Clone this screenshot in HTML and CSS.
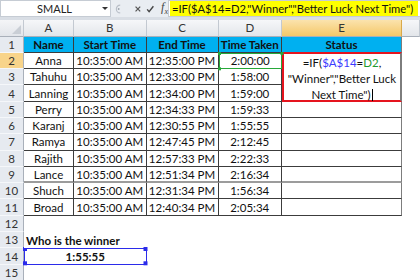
FILE: index.html
```html
<!DOCTYPE html>
<html lang="en">
<head>
    <meta charset="UTF-8">
    <meta name="viewport" content="width=device-width, initial-scale=1.0">
    <title>Who is the winner</title>
    <link rel="stylesheet" href="styles.css">
</head>
<body>
    <div class="planilha">
        <div class="formula-bar">
            <div class="name-box">
                <span class="name">SMALL</span>
                <span class="arrow"></span>
            </div>
            <div class="fx-buttons">
                <svg class="grip" width="10" height="12" viewBox="0 0 10 12">
                    <path d="M8 1 A5 5 0 0 0 8 11" fill="none" stroke="#b8bec7" stroke-width="1.4"/>
                    <circle cx="6" cy="6" r="1.2" fill="#9aa2ad"/>
                </svg>
                <svg class="btn" width="10" height="10" viewBox="0 0 10 10">
                    <path d="M2 2 L8 8 M8 2 L2 8" stroke="#555" stroke-width="1.6"/>
                </svg>
                <svg class="btn" width="11" height="10" viewBox="0 0 11 10">
                    <path d="M1.5 5.5 L4 8.5 L9.5 1.5" fill="none" stroke="#444" stroke-width="1.8"/>
                </svg>
                <span class="fx">f<sub>x</sub></span>
            </div>
            <div class="formula-input">
                <span class="hl">=IF($A$14=D2,"Winner","Better Luck Next Time")</span>
            </div>
        </div>
        <div class="band"></div>
        <div class="grid" id="grid"></div>
    </div>

    <script>
        const dados = [
            ["Anna", "10:35:00 AM", "12:35:00 PM", "2:00:00"],
            ["Tahuhu", "10:35:00 AM", "12:33:00 PM", "1:58:00"],
            ["Lanning", "10:35:00 AM", "12:34:00 PM", "1:59:00"],
            ["Perry", "10:35:00 AM", "12:34:33 PM", "1:59:33"],
            ["Karanj", "10:35:00 AM", "12:30:55 PM", "1:55:55"],
            ["Ramya", "10:35:00 AM", "12:47:45 PM", "2:12:45"],
            ["Rajith", "10:35:00 AM", "12:57:33 PM", "2:22:33"],
            ["Lance", "10:35:00 AM", "12:51:34 PM", "2:16:34"],
            ["Shuch", "10:35:00 AM", "12:31:34 PM", "1:56:34"],
            ["Broad", "10:35:00 AM", "12:40:34 PM", "2:05:34"]
        ];
        const titulos = ["Name", "Start Time", "End Time", "Time Taken", "Status"];

        function celula(classes, html) {
            const div = document.createElement("div");
            div.className = "c " + classes;
            if (html) div.innerHTML = html;
            document.getElementById("grid").appendChild(div);
            return div;
        }

        function montarPlanilha() {
            celula("corner");
            ["A", "B", "C", "D", "E"].forEach(l => celula("ch" + (l === "E" ? " sel" : ""), l));
            celula("ch blank");

            for (let r = 1; r <= 15; r++) {
                celula("rh" + (r === 2 ? " sel" : ""), r);

                if (r === 1) {
                    titulos.forEach((t, i) => celula("t th" + (i === 4 ? " last" : ""), t));
                } else if (r <= 11) {
                    const linha = dados[r - 2];
                    const quebra = r === 9 ? " brk" : "";
                    linha.forEach((v, i) => celula("t" + quebra + (r === 2 && i === 3 ? " ref-green" : ""), v));
                    if (r === 2) {
                        celula("t last editing",
                            '<span>=IF(<b class="blue">$A$14</b>=<b class="green">D2</b>,</span>' +
                            '<span>"Winner","Better Luck</span>' +
                            '<span>Next Time")<i class="cursor"></i></span>');
                    } else if (r > 4) {
                        celula("t last" + quebra);
                    }
                } else if (r === 13) {
                    celula("label", "Who is the winner");
                    celula("vazio"); celula("vazio"); celula("vazio"); celula("vazio");
                } else if (r === 14) {
                    celula("ref-blue", "1:55:55");
                    celula("vazio"); celula("vazio"); celula("vazio");
                } else {
                    celula("vazio"); celula("vazio"); celula("vazio"); celula("vazio"); celula("vazio");
                }
                celula("free");
            }
        }

        window.onload = montarPlanilha;
    </script>
</body>
</html>
```

FILE: styles.css
```css
:root {
    --azul-titulo: #00b0f0;
    --linha: #3c3c3c;
    --cabecalho: #e6eaf0;
    --cabecalho-borda: #c3c9d1;
    --selecao: #f8d48a;
}

body {
    margin: 0;
    background: #fff;
}

.planilha {
    width: 420px;
    height: 280px;
    overflow: hidden;
    font-family: Lato, 'Liberation Sans', sans-serif;
    font-size: 11.5px;
    color: #111;
}

/* barra de formula */
.formula-bar {
    display: flex;
    height: 17px;
    background: #e9edf2;
}

.formula-bar .name-box {
    width: 111px;
    display: flex;
    align-items: center;
    box-sizing: border-box;
    background: #fff;
    border: 1px solid #c6ccd4;
    padding-left: 36px;
    font-size: 11px;
    color: #222;
}

.formula-bar .name-box .name {
    flex: 1;
}

.formula-bar .arrow {
    width: 0;
    height: 0;
    margin-right: 2px;
    border-left: 3px solid transparent;
    border-right: 3px solid transparent;
    border-top: 3px solid #333;
}

.formula-bar .fx-buttons {
    width: 57px;
    display: flex;
    align-items: center;
    gap: 4px;
    padding-left: 3px;
    box-sizing: border-box;
}

.formula-bar .grip {
    margin-right: 8px;
}

.formula-bar .fx {
    font-family: 'Liberation Serif', serif;
    font-style: italic;
    font-size: 12px;
    color: #444;
    margin-left: 3px;
}

.formula-bar .fx sub {
    font-size: 8px;
}

.formula-bar .formula-input {
    flex: 1;
    display: flex;
    align-items: center;
    background: #fff;
    border: 1px solid #c6ccd4;
    border-right: none;
    padding-left: 1px;
    font-size: 11.2px;
}

.formula-bar .hl {
    background: #ffff00;
    padding: 1px 5px 1px 2px;
    white-space: nowrap;
}

.band {
    height: 3px;
    background: #d9dee5;
}

/* grade */
.grid {
    display: grid;
    grid-template-columns: 24px 50px 72.5px 72px 63.5px 120px 1fr;
    grid-template-rows: 16.5px repeat(15, 16.3px);
}

.grid .c {
    box-sizing: border-box;
    display: flex;
    align-items: center;
    justify-content: center;
    white-space: nowrap;
    background: #fff;
    min-width: 0;
}

.grid .vazio,
.grid .free {
    background: transparent;
}

.grid .corner {
    background: linear-gradient(#f4f5f7, #e2e5ea);
    border-right: 1px solid var(--cabecalho-borda);
    border-bottom: 1px solid #a9b0ba;
    position: relative;
}

.grid .corner::after {
    content: "";
    position: absolute;
    right: 2px;
    bottom: 2px;
    border-left: 9px solid transparent;
    border-bottom: 9px solid #c9ced5;
}

.grid .ch {
    background: linear-gradient(#f6f7f9, #e3e6ea);
    border-right: 1px solid var(--cabecalho-borda);
    border-bottom: 1px solid #a9b0ba;
    color: #333;
}

.grid .ch.sel {
    background: linear-gradient(#fbe3ad, #f4c869);
    border-right-color: #d9a94a;
}

.grid .rh {
    background: var(--cabecalho);
    border-right: 1px solid #a9b0ba;
    border-bottom: 1px solid #f5f7fa;
    color: #333;
}

.grid .rh.sel {
    background: var(--selecao);
}

.grid .t {
    border-right: 1px solid var(--linha);
    border-bottom: 1px solid var(--linha);
}

.grid .t.last {
    border-right-color: #7d7d7d;
}

.grid .t.brk {
    border-bottom: 2px solid #9c9c9c;
}

.grid .th {
    background: var(--azul-titulo);
    font-weight: bold;
}

.grid .ref-green {
    border: 1px solid #27a83a;
    position: relative;
}

.grid .ref-green::after {
    content: "";
    position: absolute;
    left: -2px;
    top: -2px;
    width: 3px;
    height: 3px;
    background: #27a83a;
    box-shadow: 62.5px 0 #27a83a, 0 15.3px #27a83a;
}

.grid .editing {
    grid-row: span 3;
    flex-direction: column;
    justify-content: flex-start;
    border: 2px solid #e5141e;
    margin-top: -1px;
    padding-top: 1px;
    line-height: 16.3px;
}

.grid .editing b {
    font-weight: normal;
}

.grid .editing .blue {
    color: #3b3bff;
}

.grid .editing .green {
    color: #1f9a2e;
}

.grid .cursor {
    display: inline-block;
    width: 1px;
    height: 12px;
    margin-left: 1px;
    vertical-align: -2px;
    background: #000;
}

.grid .label {
    justify-content: flex-start;
    padding-left: 2px;
    font-weight: bold;
    overflow: visible;
    position: relative;
    z-index: 1;
}

.grid .ref-blue {
    grid-column: span 2;
    border: 1px solid #2b2bea;
    font-weight: bold;
    position: relative;
}

.grid .ref-blue::after {
    content: "";
    position: absolute;
    left: -2px;
    top: -2px;
    width: 4px;
    height: 4px;
    background: #2b2bea;
    box-shadow: 120.5px 0 #2b2bea, 0 14.3px #2b2bea, 120.5px 14.3px #2b2bea;
}
```
